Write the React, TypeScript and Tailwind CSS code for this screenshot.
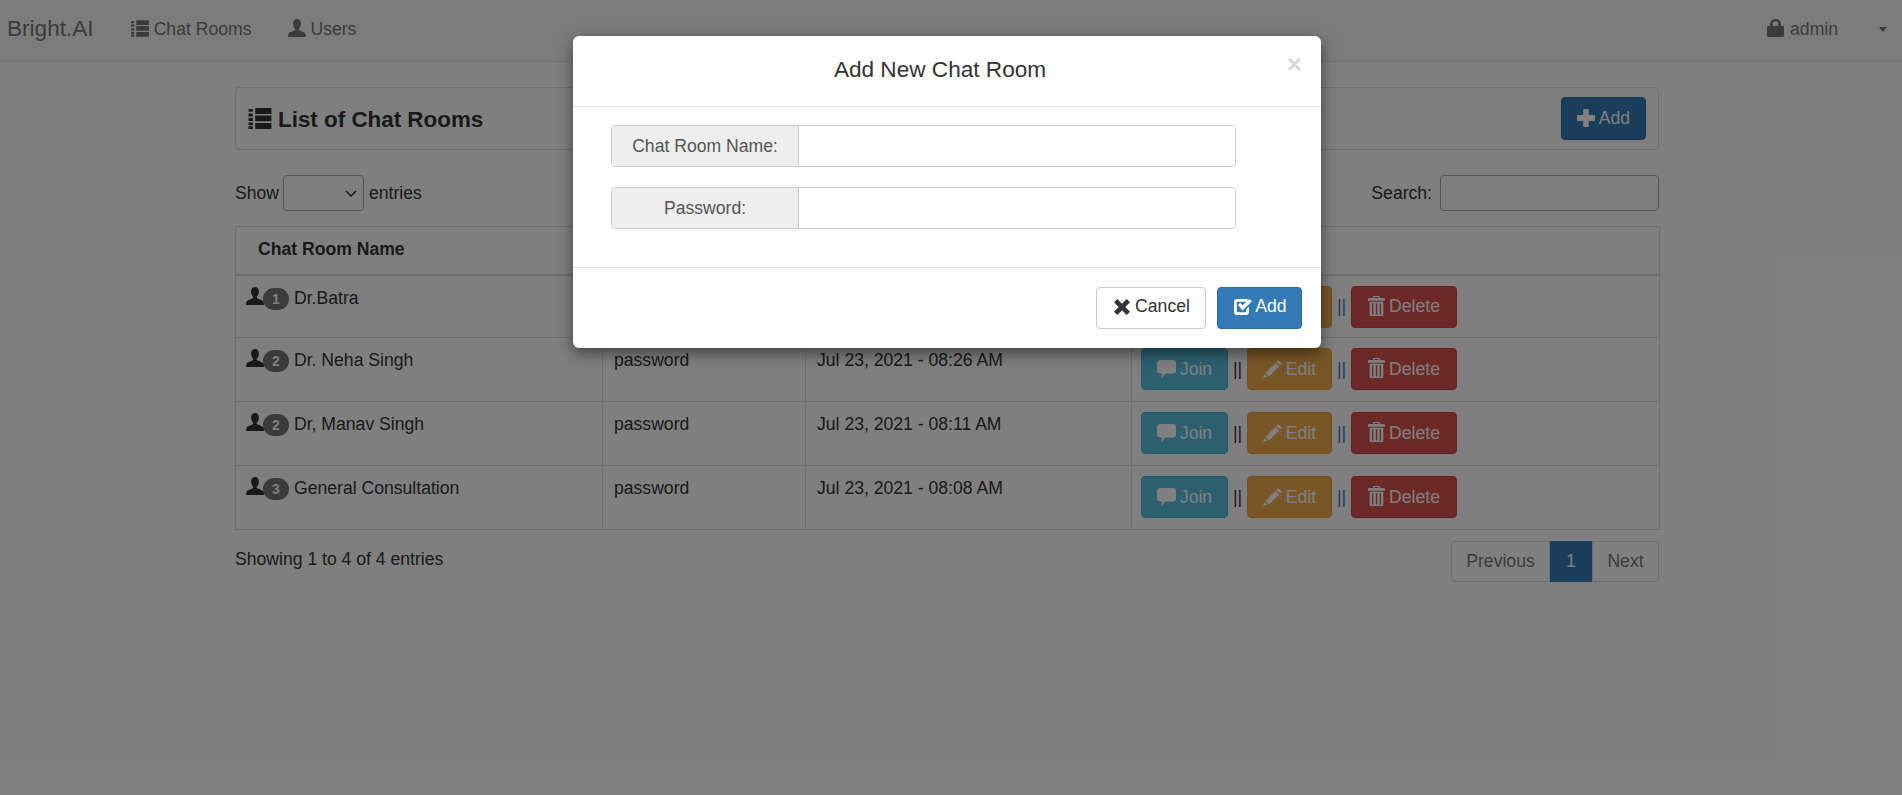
type IconProps = { className?: string };

const ListIcon = ({ className }: IconProps) => (
  <svg viewBox="0 0 24 22" className={className} fill="currentColor">
    <path d="M0 1h4.500v3H0zM7 0h17v6.200H7zM0 5.800h4.500v3H0zM7 7.800h17v6.200H7zM0 10.600h4.500v3H0zM0 15.200h4.500v3H0zM7 15.600h17V22H7zM0 19h4.500v3H0z" />
  </svg>
);

const UserIcon = ({ className }: IconProps) => (
  <svg viewBox="0 0 18 18" className={className} fill="currentColor">
    <path d="M9 0c2.500 0 3.900 1.900 3.900 4.500 0 2-.7 3.800-1.800 5-.5.6-.4 1.500.4 1.900 1.800.8 4.500 1.300 5.500 2.700.7.900 1 2.400 1 3.900H0c0-1.500.3-3 1-3.900 1-1.400 3.700-1.900 5.500-2.700.8-.4.9-1.300.4-1.900-1.100-1.200-1.800-3-1.800-5C5.100 1.900 6.500 0 9 0z" />
  </svg>
);

const LockIcon = ({ className }: IconProps) => (
  <svg viewBox="0 0 17 18" className={className} fill="currentColor">
    <path fillRule="evenodd" d="M3 7V5a5.500 5 0 0 1 11 0v2h1.500c.8 0 1.500.6 1.500 1.400v8.100c0 .8-.7 1.500-1.500 1.500h-14C.7 18 0 17.300 0 16.500V8.400C0 7.600.7 7 1.500 7zm2.700 0h5.600V5a2.800 2.700 0 0 0-5.600 0z" />
  </svg>
);

const PlusIcon = ({ className }: IconProps) => (
  <svg viewBox="0 0 18 18" className={className} fill="currentColor">
    <path d="M7 0h4c.5 0 .8.300.8.800V6h5.400c.5 0 .8.300.8.800v4.400c0 .5-.3.800-.8.800h-5.400v5.200c0 .5-.3.800-.8.800H7c-.5 0-.8-.3-.8-.8V12H.8c-.5 0-.8-.3-.8-.8V6.800C0 6.300.3 6 .8 6h5.400V.8c0-.5.300-.8.800-.8z" />
  </svg>
);

const CommentIcon = ({ className }: IconProps) => (
  <svg viewBox="0 0 19 18" className={className} fill="currentColor">
    <path d="M3 0h13c1.700 0 3 1.200 3 2.800v8c0 1.600-1.300 2.800-3 2.800H8.500L4.500 18l.3-4.400H3c-1.700 0-3-1.200-3-2.800v-8C0 1.200 1.300 0 3 0z" />
  </svg>
);

const PencilIcon = ({ className }: IconProps) => (
  <svg viewBox="0 0 19 18" className={className} fill="currentColor">
    <path d="M15.200 0L19 3.400l-2 2.100-3.800-3.400zM12.300 3.100l3.800 3.400L6.300 16.300 2.500 12.900zM1.900 14l2.900 2.800L0 18z" />
  </svg>
);

const TrashIcon = ({ className }: IconProps) => (
  <svg viewBox="0 0 16 19" className={className} fill="currentColor">
    <path fillRule="evenodd" d="M6 0h4c.8 0 1.200.5 1.200 1.200V2H15c.6 0 1 .4 1 .9V4.500H0V2.900c0-.5.4-.9 1-.9h3.800v-.8C4.800.5 5.200 0 6 0zM6 1v1h4V1zM1.500 5.500h13V18c0 .6-.4 1-1 1h-11c-.6 0-1-.4-1-1zM3.700 7v10.500H5V7zm3.600 0v10.500h1.400V7zm3.700 0v10.500h1.300V7z" />
  </svg>
);

const RemoveIcon = ({ className }: IconProps) => (
  <svg viewBox="0 0 16 16" className={className} fill="currentColor">
    <path d="M3.300 0L8 4.700 12.700 0 16 3.300 11.300 8l4.700 4.700-3.300 3.300L8 11.300 3.300 16 0 12.700 4.700 8 0 3.300z" />
  </svg>
);

const CheckIcon = ({ className }: IconProps) => (
  <svg viewBox="0 0 18 16" className={className} fill="currentColor">
    <path d="M3 0h10.500v2.800H4c-.7 0-1.200.5-1.200 1.200v8c0 .7.500 1.200 1.200 1.200h7c.7 0 1.200-.5 1.200-1.200v-1.500L15 7.800V13c0 1.700-1.300 3-3 3H3c-1.700 0-3-1.300-3-3V3c0-1.700 1.300-3 3-3z" />
    <path d="M4 6l2.200-2.200 2.300 2.400L15.500 0 18 2.300 8.500 11.500z" />
  </svg>
);

const rooms = [
  { name: 'Dr.Batra', count: 1, date: 'Jul 23, 2021 - 08:31 AM' },
  { name: 'Dr. Neha Singh', count: 2, date: 'Jul 23, 2021 - 08:26 AM' },
  { name: 'Dr, Manav Singh', count: 2, date: 'Jul 23, 2021 - 08:11 AM' },
  { name: 'General Consultation', count: 3, date: 'Jul 23, 2021 - 08:08 AM' },
];

const RoomRow = ({ room, first }: { room: (typeof rooms)[number]; first: boolean }) => (
  <tr className={first ? 'h-[63px]' : 'h-[64px]'}>
    <td className="border border-[#ddd] pl-[10px] pt-[10px] align-top">
      <div className="flex items-start">
        <UserIcon className="mt-px h-[18px] w-[18px] shrink-0 text-[#333]" />
        <span className="-ml-px mt-0.5 flex h-[22px] w-[26px] shrink-0 items-center justify-center rounded-full bg-[#777] text-sm font-bold text-white">
          {room.count}
        </span>
        <span className="ml-[5px] leading-[24px]">{room.name}</span>
      </div>
    </td>
    <td className="border border-[#ddd] pl-[11px] pt-[10px] align-top leading-[24px]">password</td>
    <td className="border border-[#ddd] pl-[11px] pt-[10px] align-top leading-[24px]">{room.date}</td>
    <td className="border border-[#ddd] pl-[9px] pt-[10px] align-top">
      <div className="flex items-center text-[#337ab7]">
        <button className="flex h-[42px] w-[87px] items-center justify-center gap-1 rounded border border-[#46b8da] bg-[#5bc0de] text-white">
          <CommentIcon className="h-[18px] w-[19px]" />
          Join
        </button>
        <span className="w-[19px] text-center text-[#333]">||</span>
        <button className="flex h-[42px] w-[85px] items-center justify-center gap-1 rounded border border-[#eea236] bg-[#f0ad4e] text-white">
          <PencilIcon className="h-[18px] w-[19px]" />
          Edit
        </button>
        <span className="w-[19px] text-center">||</span>
        <button className="flex h-[42px] w-[106px] items-center justify-center gap-1 rounded border border-[#d43f3a] bg-[#d9534f] text-white">
          <TrashIcon className="mb-0.5 h-[20px] w-[17px]" />
          Delete
        </button>
      </div>
    </td>
  </tr>
);

export default function App() {
  return (
    <div className="relative h-[795px] overflow-hidden bg-white font-['Liberation_Sans',Arial,sans-serif] text-[17.6px] text-[#333]">
      <nav className="flex h-[62px] items-center border-b border-[#e7e7e7] bg-[#f8f8f8] pb-[3px] text-[#777]">
        <a className="ml-[7px] text-[22.6px]">Bright.AI</a>
        <a className="ml-[37px] flex items-center gap-[5px]">
          <ListIcon className="mb-px h-[17px] w-[18px]" />
          Chat Rooms
        </a>
        <a className="ml-[37px] flex items-center gap-1">
          <UserIcon className="mb-[2px] h-[18px] w-[18px]" />
          Users
        </a>
        <a className="ml-auto flex items-center gap-[6px]">
          <LockIcon className="mb-[2px] h-[18px] w-[17px]" />
          admin
        </a>
        <span className="ml-[41px] mr-[15px] h-0 w-0 border-x-[4.5px] border-t-[5px] border-x-transparent border-t-[#777]" />
      </nav>

      <main className="ml-[235px] w-[1424px]">
        <section className="mt-[25px] flex h-[63px] items-center justify-between rounded border border-[#ddd] pl-3 pr-3">
          <h3 className="flex items-center gap-[6px] pt-0.5 text-[22.4px] font-bold">
            <ListIcon className="mb-0.5 h-[21px] w-6" />
            List of Chat Rooms
          </h3>
          <button className="flex h-[43px] w-[85px] items-center justify-center gap-1 rounded border border-[#2e6da4] bg-[#337ab7] text-white">
            <PlusIcon className="mb-px h-[18px] w-[18px]" />
            Add
          </button>
        </section>

        <div className="mt-[25px] flex h-9 items-center justify-between">
          <div className="flex items-center">
            Show
            <div className="relative ml-1 mr-[5px] h-9 w-[81px]">
              <select className="h-9 w-full appearance-none rounded border border-[#aaa] bg-transparent" />
              <svg viewBox="0 0 12 7" className="absolute right-[7px] top-[15px] h-[7px] w-3 text-[#333]" fill="none" stroke="currentColor" strokeWidth="1.6">
                <path d="M1 1l5 5 5-5" />
              </svg>
            </div>
            entries
          </div>
          <div className="flex items-center">
            Search:
            <input className="ml-2 h-9 w-[219px] rounded border border-[#aaa] bg-transparent" />
          </div>
        </div>

        <table className="mt-[15px] w-[1424px] table-fixed border-collapse">
          <colgroup>
            <col className="w-[367px]" />
            <col className="w-[203px]" />
            <col className="w-[326px]" />
            <col className="w-[528px]" />
          </colgroup>
          <thead>
            <tr className="h-[48px]">
              <th className="border border-b-2 border-[#ddd] pl-[22px] pb-[3px] text-left">Chat Room Name</th>
              <th className="border border-b-2 border-[#ddd] pl-[22px] text-left">Password</th>
              <th className="border border-b-2 border-[#ddd] pl-[22px] text-left">Date Created</th>
              <th className="border border-b-2 border-[#ddd] pl-[22px] text-left">Action</th>
            </tr>
          </thead>
          <tbody>
            {rooms.map((room, i) => (
              <RoomRow key={room.name} room={room} first={i === 0} />
            ))}
          </tbody>
        </table>

        <div className="mt-[11px] flex items-start justify-between">
          <div className="pt-[5px]">Showing 1 to 4 of 4 entries</div>
          <div className="flex h-[41px]">
            <a className="flex w-[99px] items-center justify-center rounded-l border border-[#ddd] text-[#777]">Previous</a>
            <a className="flex w-[42px] items-center justify-center border border-[#337ab7] bg-[#337ab7] text-white">1</a>
            <a className="flex w-[67px] items-center justify-center rounded-r border border-[#ddd] text-[#777]">Next</a>
          </div>
        </div>
      </main>

      {/* Backdrop */}
      <div className="absolute inset-0 bg-black/50" />

      {/* Modal */}
      <div className="absolute left-[573px] top-9 w-[748px] rounded-md bg-white shadow-[0_5px_15px_rgba(0,0,0,0.5)]">
        <div className="relative flex h-[71px] items-center justify-center border-b border-[#e5e5e5] pb-[3px] pr-[14px]">
          <h4 className="text-[22.6px]">Add New Chat Room</h4>
          <span className="absolute right-[19px] top-[18px] text-[26px] leading-5 font-bold text-[#333]/20">×</span>
        </div>
        <div className="h-[160px] pl-[38px] pt-[18px]">
          <div className="flex h-[42px] w-[625px] rounded border border-[#ccc]">
            <span className="flex w-[187px] items-center justify-center rounded-l border-r border-[#ccc] bg-[#eee] text-[#555]">
              Chat Room Name:
            </span>
            <input className="min-w-0 flex-1 rounded-r bg-white" />
          </div>
          <div className="mt-5 flex h-[42px] w-[625px] rounded border border-[#ccc]">
            <span className="flex w-[187px] items-center justify-center rounded-l border-r border-[#ccc] bg-[#eee] text-[#555]">
              Password:
            </span>
            <input className="min-w-0 flex-1 rounded-r bg-white" />
          </div>
        </div>
        <div className="flex h-[81px] items-start justify-end gap-[11px] border-t border-[#e5e5e5] pr-[19px] pt-[19px]">
          <button className="flex h-[42px] w-[110px] items-center justify-center gap-[5px] rounded border border-[#ccc] bg-white pb-[3px] pl-0.5">
            <RemoveIcon className="h-4 w-4" />
            Cancel
          </button>
          <button className="flex h-[42px] w-[85px] items-center justify-center gap-[3px] rounded border border-[#2e6da4] bg-[#337ab7] pb-[3px] pl-0.5 text-white">
            <CheckIcon className="h-4 w-[18px]" />
            Add
          </button>
        </div>
      </div>
    </div>
  );
}
